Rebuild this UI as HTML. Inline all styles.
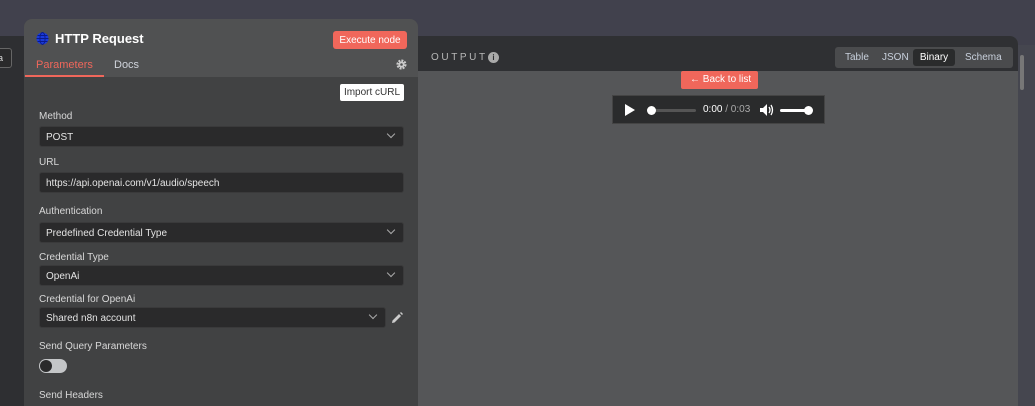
<!DOCTYPE html>
<html><head><style>
*{margin:0;padding:0;box-sizing:border-box}
html,body{width:1035px;height:406px;overflow:hidden}
body{background:#41414d;font-family:"Liberation Sans",sans-serif;position:relative}
div,span{position:absolute}
.lbl{left:39px;font-size:10px;color:#d8d8d8}
.inp{left:39px;width:365px;height:21px;background:#2a2a2b;border:1px solid #3a3a3b;border-radius:3px;color:#e4e4e4;font-size:10px;padding:5px 0 0 6px}
.chev{right:9px;top:4px;width:6px;height:6px;border-right:1px solid #aaa;border-bottom:1px solid #aaa;transform:rotate(45deg)}
</style></head><body>
<div style="left:0;top:36px;width:24px;height:370px;background:#2e2f32"></div>
<div style="left:-4px;top:48px;width:16px;height:20px;border:1px solid #666;border-radius:3px;background:#2a2a2b;color:#ddd;font-size:9px;padding:4px 0 0 1px">a</div>
<!-- output -->
<div style="left:418px;top:36px;width:600px;height:370px;background:#555658;border-top-right-radius:8px;overflow:hidden">
 <div style="left:0;top:0;width:600px;height:35px;background:#2f3033"></div>
 <div style="left:13px;top:16px;font-size:10px;letter-spacing:2.6px;color:#b8b8b8">OUTPUT</div>
 <div style="left:70px;top:16px;width:11px;height:11px;border-radius:50%;background:#aaa;color:#2f3033;font-size:8px;font-weight:bold;text-align:center;line-height:11px">i</div>
 <div style="left:417px;top:11px;width:178px;height:21px;background:#4a4b4d;border-radius:3px;font-size:10px;color:#c8d0dc">
  <span style="left:10px;top:5px">Table</span><span style="left:47px;top:5px">JSON</span>
  <span style="left:78px;top:2px;width:42px;height:17px;background:#2a2b2c;border-radius:3px;color:#fff;text-align:center;padding-top:3px">Binary</span>
  <span style="left:130px;top:5px">Schema</span>
 </div>
 <div style="left:263px;top:35px;width:77px;height:18px;background:#f0675b;border-radius:2px;color:#fff;font-size:10px;padding:3px 0 0 9px">&#8592; Back to list</div>
 <div style="left:194px;top:59px;width:213px;height:29px;background:#2a2b2c;border:1px solid #444">
  <svg style="position:absolute;left:12px;top:8px" width="10" height="12"><path d="M0 0L10 6L0 12Z" fill="#fff"/></svg>
  <span style="left:35px;top:13px;width:48px;height:3px;background:#555;border-radius:2px"></span>
  <span style="left:34px;top:10px;width:9px;height:9px;background:#fff;border-radius:50%"></span>
  <span style="left:90px;top:8px;font-size:10px;color:#fff">0:00 <span style="position:static;color:#aaa">/ 0:03</span></span>
  <svg style="position:absolute;left:147px;top:8px" width="14" height="12"><path d="M0 4H3L7 0V12L3 8H0Z" fill="#fff"/><path d="M9 3Q11 6 9 9M11 1Q14 6 11 11" stroke="#fff" fill="none" stroke-width="1.3"/></svg>
  <span style="left:167px;top:13px;width:30px;height:3px;background:#fff;border-radius:2px"></span>
  <span style="left:191px;top:10px;width:9px;height:9px;background:#fff;border-radius:50%"></span>
 </div>
</div>
<div style="left:1018px;top:45px;width:17px;height:361px;background:#45464f"></div>
<div style="left:1020px;top:55px;width:4px;height:35px;background:#777;border-radius:2px"></div>
<!-- panel -->
<div style="left:24px;top:19px;width:394px;height:387px;background:#414243;border-radius:8px 8px 0 0;overflow:hidden">
 <div style="left:0;top:0;width:394px;height:58px;background:#505152"></div>
 <svg style="position:absolute;left:12px;top:13px" width="13" height="13" viewBox="0 0 13 13"><circle cx="6.5" cy="6.5" r="6" fill="#1a3adb"/><g stroke="#091a8c" stroke-width="0.9" fill="none"><ellipse cx="6.5" cy="6.5" rx="2.6" ry="6"/><path d="M0.5 6.5H12.5M1.5 3.5H11.5M1.5 9.5H11.5"/></g></svg>
 <div style="left:31px;top:12px;font-size:13px;color:#fff;font-weight:bold">HTTP Request</div>
 <div style="left:309px;top:12px;width:74px;height:18px;background:#f0675b;border-radius:3px;color:#fff;font-size:10px;text-align:center;padding-top:4px">Execute node</div>
 <div style="left:12px;top:40px;font-size:11px;color:#f0675b">Parameters</div>
 <div style="left:1px;top:56px;width:79px;height:2px;background:#f0675b"></div>
 <div style="left:90px;top:40px;font-size:11px;color:#d0d4dc">Docs</div>
 <svg style="position:absolute;left:372px;top:40px" width="11" height="11" viewBox="0 0 12 12"><circle cx="6" cy="6" r="4" fill="none" stroke="#ccc" stroke-width="3" stroke-dasharray="2 1.1"/><circle cx="6" cy="6" r="3.3" fill="#ccc"/><circle cx="6" cy="6" r="1.4" fill="#505152"/></svg>
 <div style="left:316px;top:65px;width:64px;height:17px;background:#fff;border-radius:2px;color:#333;font-size:10px;text-align:center;padding-top:3px">Import cURL</div>
</div>
<div class="lbl" style="top:111px">Method</div>
<div class="inp" style="top:126px">POST<span class="chev"></span></div>
<div class="lbl" style="top:157px">URL</div>
<div class="inp" style="top:172px">https://api.openai.com/v1/audio/speech</div>
<div class="lbl" style="top:206px">Authentication</div>
<div class="inp" style="top:222px">Predefined Credential Type<span class="chev"></span></div>
<div class="lbl" style="top:252px">Credential Type</div>
<div class="inp" style="top:265px">OpenAi<span class="chev"></span></div>
<div class="lbl" style="top:294px">Credential for OpenAi</div>
<div class="inp" style="top:307px;width:347px">Shared n8n account<span class="chev"></span></div>
<svg style="position:absolute;left:391px;top:312px" width="12" height="12" viewBox="0 0 12 12"><path d="M1 11L1.5 8.5L8 2L10 4L3.5 10.5Z M9 1L10 0L12 2L11 3Z" fill="#ccc"/></svg>
<div class="lbl" style="top:341px">Send Query Parameters</div>
<div style="left:39px;top:359px;width:28px;height:14px;background:#c4c6c8;border-radius:7px"></div>
<div style="left:40px;top:360px;width:12px;height:12px;background:#2a2a2b;border-radius:50%"></div>
<div class="lbl" style="top:390px">Send Headers</div>
</body></html>
